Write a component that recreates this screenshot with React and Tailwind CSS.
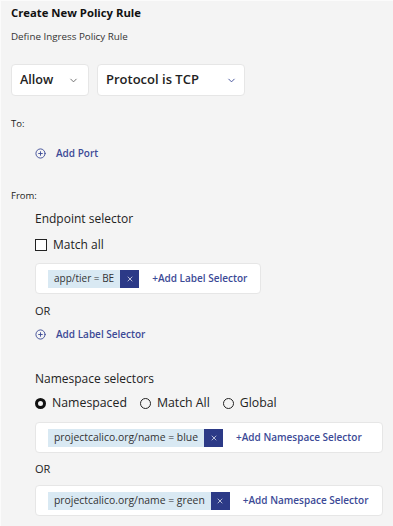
import React from "react";
import { ChevronDown, CirclePlus, X } from "lucide-react";

const font = { fontFamily: '"Open Sans", "Noto Sans", sans-serif' };

function Chip({ text, size }) {
  return (
    <div className="flex h-[18px] items-stretch">
      <div className={`flex items-center bg-[#d9e9f3] pl-[6px] pr-[6px] text-[#333] ${size}`}>{text}</div>
      <div className="flex w-[19px] items-center justify-center bg-[#2c3a87] text-white">
        <X size={8} strokeWidth={2} />
      </div>
    </div>
  );
}

function SelectorBox({ text, add, width, size }) {
  return (
    <div className={`flex h-[31px] items-center rounded-[4px] border border-[#e6e6e6] bg-white pl-[12px] ${width}`}>
      <Chip text={text} size={size} />
      <span className="ml-[13px] text-[10px] font-semibold text-[#3c4a96]">{add}</span>
    </div>
  );
}

function AddLink({ text }) {
  return (
    <div className="flex h-[20px] items-center gap-[10px] text-[#3c4a96]">
      <CirclePlus size={11} strokeWidth={2} />
      <span className="text-[10px] font-semibold">{text}</span>
    </div>
  );
}

function Radio({ checked, label }) {
  return (
    <div className="flex items-center gap-[6px]">
      <span
        className={`box-border inline-block h-[11px] w-[11px] rounded-full ${
          checked ? "border-[3px] border-[#111]" : "border-[1.5px] border-[#222]"
        }`}
      />
      <span className="text-[12.3px] text-[#222]">{label}</span>
    </div>
  );
}

export default function App() {
  return (
    <div
      className="h-[526px] w-[393px] overflow-hidden border-l border-t border-[#fbfbfb] bg-[#f4f4f4] px-[10px] pt-[4px] text-[#222]"
      style={font}
    >
      <div className="flex h-[16px] items-center text-[11.3px] font-bold text-[#111]">Create New Policy Rule</div>
      <div className="mt-[8px] flex h-[16px] items-center text-[9.8px] text-[#333]">Define Ingress Policy Rule</div>

      <div className="mt-[19px] flex gap-[8px]">
        <div className="flex h-[32px] w-[78px] items-center justify-between rounded-[4px] border border-[#e6e6e6] bg-white pl-[8px] pr-[9px]">
          <span className="text-[12.6px] font-semibold text-[#222]">Allow</span>
          <ChevronDown size={11} strokeWidth={2} className="text-[#666]" />
        </div>
        <div className="flex h-[32px] w-[148px] items-center justify-between rounded-[4px] border border-[#e6e6e6] bg-white pl-[8px] pr-[7px]">
          <span className="text-[13px] font-semibold text-[#222]">Protocol is TCP</span>
          <ChevronDown size={11} strokeWidth={2} className="text-[#3c4a96]" />
        </div>
      </div>

      <div className="mt-[20px] flex h-[16px] items-center text-[9.5px] text-[#222]">To:</div>
      <div className="mt-[11px] pl-[24px]">
        <AddLink text="Add Port" />
      </div>

      <div className="mt-[25px] flex h-[16px] items-center text-[9.5px] text-[#222]">From:</div>

      <div className="pl-[24px]">
        <div className="mt-[6px] flex h-[18px] items-center text-[12px] text-[#222]">Endpoint selector</div>
        <div className="mt-[8px] flex h-[18px] items-center gap-[6px]">
          <span className="box-border inline-block h-[12px] w-[12px] border-[1.5px] border-[#222] bg-white" />
          <span className="text-[12px] text-[#222]">Match all</span>
        </div>
        <div className="mt-[9px]">
          <SelectorBox text="app/tier = BE" add="+Add Label Selector" width="w-[226px]" size="text-[10px]" />
        </div>
        <div className="mt-[9px] flex h-[16px] items-center text-[11px] text-[#222]">OR</div>
        <div className="mt-[5px]">
          <AddLink text="Add Label Selector" />
        </div>

        <div className="mt-[26px] flex h-[18px] items-center text-[12px] text-[#222]">Namespace selectors</div>
        <div className="mt-[6px] flex h-[18px] items-center gap-[13px]">
          <Radio checked label="Namespaced" />
          <Radio label="Match All" />
          <Radio label="Global" />
        </div>
        <div className="mt-[10px]">
          <SelectorBox text="projectcalico.org/name = blue" add="+Add Namespace Selector" width="w-[348px]" size="text-[10.4px]" />
        </div>
        <div className="mt-[8px] flex h-[16px] items-center text-[11px] text-[#222]">OR</div>
        <div className="mt-[8px]">
          <SelectorBox text="projectcalico.org/name = green" add="+Add Namespace Selector" width="w-[348px]" size="text-[10.4px]" />
        </div>
      </div>
    </div>
  );
}
